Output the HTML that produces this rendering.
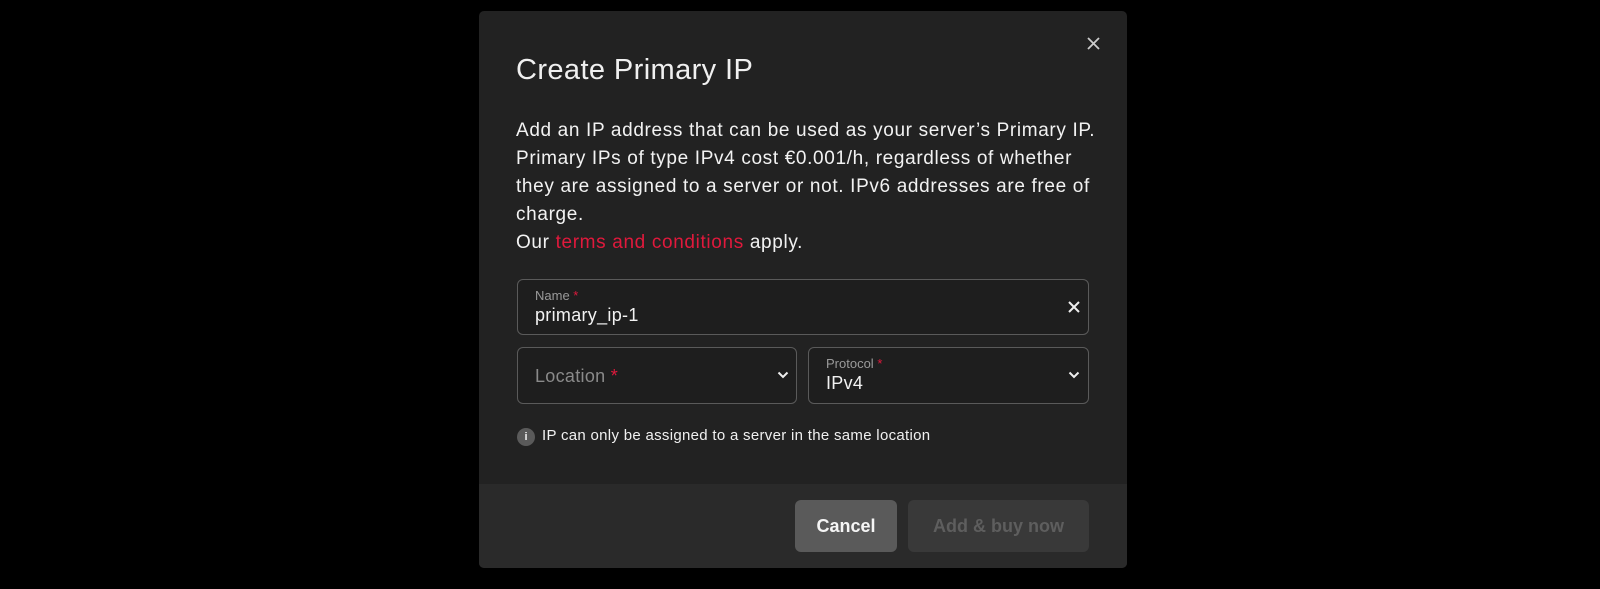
<!DOCTYPE html>
<html><head><style>
*{box-sizing:border-box;margin:0;padding:0}
body{width:1600px;height:589px;background:#000;font-family:"Liberation Sans",sans-serif;position:relative;overflow:hidden}
.m{position:absolute;left:479px;top:11px;width:648px;height:557px;background:#222;border-radius:5px;overflow:hidden}
.f{position:absolute;left:0;top:473px;width:100%;height:84px;background:#2a2a2a}
.a{position:absolute}
h1{position:absolute;left:37px;top:43px;font-weight:400;font-size:29px;color:#f0f0f0;letter-spacing:0.4px}
.p{position:absolute;left:37px;top:106px;width:600px;font-size:19px;letter-spacing:0.65px;line-height:28px;color:#f2f2f2}
.p span{color:#e0193c}
.in{position:absolute;border:1px solid #5a5a5a;border-radius:6px;background:#1e1e1e}
.lb{position:absolute;left:17px;top:8px;font-size:13px;color:#9a9a9a}
.lb i,.ph i{color:#e0193c;font-style:normal}
.v{position:absolute;left:17px;top:25px;font-size:18px;color:#f2f2f2;letter-spacing:0.3px}
.ph{position:absolute;left:17px;top:18px;font-size:18px;color:#8a8a8a;letter-spacing:0.3px}
.btn{position:absolute;top:489px;height:52px;border-radius:6px;font-size:18px;font-weight:700;text-align:center;line-height:52px}
</style></head><body>
<div class="m">
<div class="f"></div>
<svg class="a" style="left:608px;top:26px" width="13" height="13" viewBox="0 0 13 13"><path d="M1 1L12 12M12 1L1 12" stroke="#ccc" stroke-width="1.8"/></svg>
<h1>Create Primary IP</h1>
<div class="p">Add an IP address that can be used as your server’s Primary IP. Primary IPs of type IPv4 cost €0.001/h, regardless of whether<br>they are assigned to a server or not. IPv6 addresses are free of<br>charge.<br>Our <span>terms and conditions</span> apply.</div>
<div class="in" style="left:38px;top:268px;width:572px;height:56px"><div class="lb">Name <i>*</i></div><div class="v">primary_ip-1</div>
<svg class="a" style="left:550px;top:21px" width="12" height="12" viewBox="0 0 12 12"><path d="M1 1L11 11M11 1L1 11" stroke="#eee" stroke-width="2"/></svg></div>
<div class="in" style="left:38px;top:336px;width:280px;height:57px"><div class="ph">Location <i>*</i></div>
<svg class="a" style="left:259px;top:23px" width="12" height="8" viewBox="0 0 12 8"><path d="M1.5 1.5L6 6L10.5 1.5" stroke="#eee" stroke-width="2" fill="none"/></svg></div>
<div class="in" style="left:329px;top:336px;width:281px;height:57px"><div class="lb">Protocol <i>*</i></div><div class="v">IPv4</div>
<svg class="a" style="left:259px;top:23px" width="12" height="8" viewBox="0 0 12 8"><path d="M1.5 1.5L6 6L10.5 1.5" stroke="#eee" stroke-width="2" fill="none"/></svg></div>
<div class="a" style="left:38px;top:417px;width:18px;height:18px;border-radius:50%;background:#5a5a5a;color:#eee;font-size:11px;font-weight:700;text-align:center;line-height:18px">i</div>
<div class="a" style="left:63px;top:416px;font-size:15px;letter-spacing:0.3px;color:#f0f0f0">IP can only be assigned to a server in the same location</div>
<div class="btn" style="left:316px;width:102px;background:#5a5a5a;color:#f5f5f5">Cancel</div>
<div class="btn" style="left:429px;width:181px;background:#393939;color:#5e5e5e">Add &amp; buy now</div>
</div>
</body></html>
